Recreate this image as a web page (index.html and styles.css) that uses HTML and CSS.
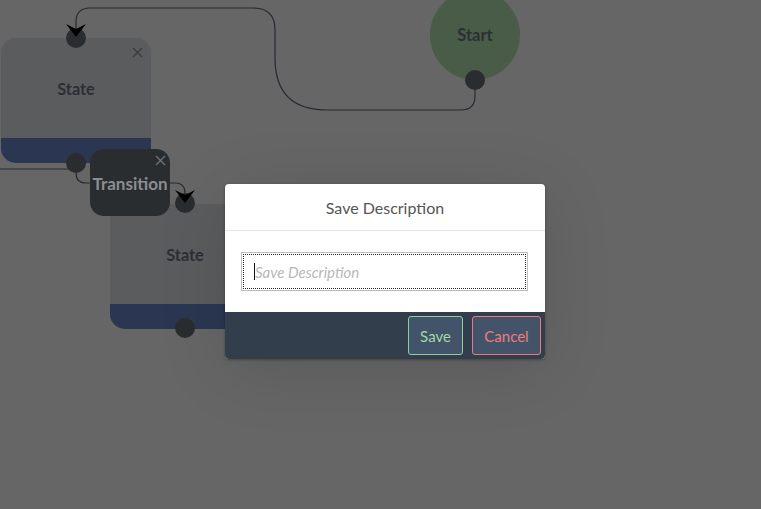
FILE: index.html
```html
<!DOCTYPE html>
<html>
<head>
<meta charset="utf-8">
<link rel="stylesheet" href="styles.css">
</head>
<body>
<div class="canvas">
  <svg class="edges" width="761" height="509" viewBox="0 0 761 509">
    <path class="edge" d="M475 80 L475 96 Q475 110 461 110 L327 110 Q275 110 275 58 L275 30 Q275 8 253 8 L90 8 Q76 8 76 22 L76 30"/>
    <path class="edge" d="M0 169 L72 169"/>
    <path class="edge" d="M76 163 L76 173 Q76 183 86 183 L92 183"/>
    <path class="edge" d="M168 183 L175 183 Q185 183 185 193"/>
  </svg>

  <div class="node state s1">
    <svg class="close" width="11" height="11" viewBox="0 0 11 11"><path d="M1 1 L10 10 M10 1 L1 10"/></svg>
    <div class="label">State</div>
    <div class="band"></div>
  </div>
  <div class="node state s2">
    <div class="label">State</div>
    <div class="band"></div>
  </div>
  <div class="node start"><span>Start</span></div>

  <div class="port p1"></div>
  <div class="port p2"></div>
  <div class="port p3"></div>
  <div class="port p4"></div>
  <div class="port p5"></div>

  <div class="node transition">
    <svg class="close tclose" width="11" height="11" viewBox="0 0 11 11"><path d="M1 1 L10 10 M10 1 L1 10"/></svg>
    <span class="tlabel">Transition</span>
  </div>

  <svg class="arrows" width="761" height="509" viewBox="0 0 761 509">
    <polygon points="66,24 76,29 86,24 76,37" fill="#000"/>
    <polygon points="175,190 185,195 195,190 185,203" fill="#000"/>
  </svg>

  <div class="dialog">
    <div class="dlg-head">Save Description</div>
    <div class="dlg-body">
      <div class="input"><span class="caret"></span><span class="ph">Save Description</span></div>
    </div>
    <div class="dlg-foot">
      <button class="btn save">Save</button>
      <button class="btn cancel">Cancel</button>
    </div>
  </div>
</div>
</body>
</html>
```
FILE: styles.css
```css
html, body {
  margin: 0;
  padding: 0;
  background: #666666;
  overflow: hidden;
  font-family: Lato, "Open Sans", sans-serif;
}
.canvas {
  position: relative;
  width: 761px;
  height: 509px;
}
.edges, .arrows {
  position: absolute;
  left: 0;
  top: 0;
}
.arrows { z-index: 5; }
.edge {
  fill: none;
  stroke: #262b33;
  stroke-width: 1.2;
}
.node {
  position: absolute;
  box-sizing: border-box;
}
.state {
  width: 150px;
  height: 125px;
  background: #5b5c5d;
  border-radius: 15px;
  overflow: hidden;
  display: flex;
  flex-direction: column;
}
.state .label {
  flex: 1;
  display: flex;
  align-items: center;
  justify-content: center;
  font-weight: 700;
  font-size: 16.3px;
  color: #2b2f35;
}
.state .band {
  height: 25px;
  background: #2b3752;
}
.s1 { left: 1px; top: 38px; }
.s2 { left: 110px; top: 204px; }
.close {
  position: absolute;
  fill: none;
  stroke: #3a3c3f;
  stroke-width: 1.4;
}
.s1 .close { left: 131px; top: 9px; }
.start {
  left: 430px;
  top: -10px;
  width: 90px;
  height: 90px;
  border-radius: 50%;
  background: #485c47;
  display: flex;
  align-items: center;
  justify-content: center;
  font-weight: 700;
  font-size: 16.5px;
  color: #2b3035;
}
.start span { margin-top: -1px; }
.port {
  position: absolute;
  width: 20px;
  height: 20px;
  border-radius: 50%;
  background: #2a2d30;
  z-index: 3;
}
.p1 { left: 66px; top: 28px; }
.p2 { left: 66px; top: 153px; }
.p3 { left: 465px; top: 70px; }
.p4 { left: 175px; top: 193px; }
.p5 { left: 175px; top: 318px; }
.transition {
  left: 90px;
  top: 149px;
  width: 80px;
  height: 67px;
  background: #2a2d30;
  border-radius: 14px;
  display: flex;
  align-items: center;
  justify-content: center;
  font-weight: 700;
  font-size: 17px;
  color: #8b8e91;
  z-index: 4;
}
.tlabel { margin-top: 1px; white-space: nowrap; }
.tclose { left: 65px; top: 6px; stroke: #6f7275; }
.dialog {
  position: absolute;
  left: 225px;
  top: 184px;
  width: 320px;
  border-radius: 4px;
  overflow: hidden;
  background: #fff;
  z-index: 10;
  box-shadow: 0 10px 70px rgba(0,0,0,0.12), 0 1px 3px rgba(0,0,0,0.3);
}
.dlg-head {
  height: 47px;
  box-sizing: border-box;
  border-bottom: 1px solid #e6e6e6;
  display: flex;
  align-items: center;
  justify-content: center;
  font-size: 16px;
  color: #555;
}
.dlg-body {
  padding: 21px 17px 21px 16px;
}
.input {
  height: 39px;
  box-sizing: border-box;
  border: 1px solid #bdbdbd;
  outline: 1px dotted #222;
  outline-offset: -3px;
  display: flex;
  align-items: center;
  padding-left: 12px;
  font-size: 15px;
  font-style: italic;
  color: #b8b8b8;
}
.caret {
  width: 1px;
  height: 17px;
  background: #111;
}
.dlg-foot {
  height: 47px;
  background: #323e4b;
  display: flex;
  justify-content: flex-end;
  align-items: center;
  gap: 9px;
  padding-right: 4px;
}
.btn {
  height: 39px;
  border-radius: 3px;
  background: #43546a;
  font-family: Lato, "Open Sans", sans-serif;
  font-size: 15px;
  padding: 0;
}
.save {
  width: 55px;
  border: 1px solid #8fd19e;
  color: #9fd9a4;
}
.cancel {
  width: 69px;
  border: 1px solid #f07878;
  color: #f07c7c;
}
```
